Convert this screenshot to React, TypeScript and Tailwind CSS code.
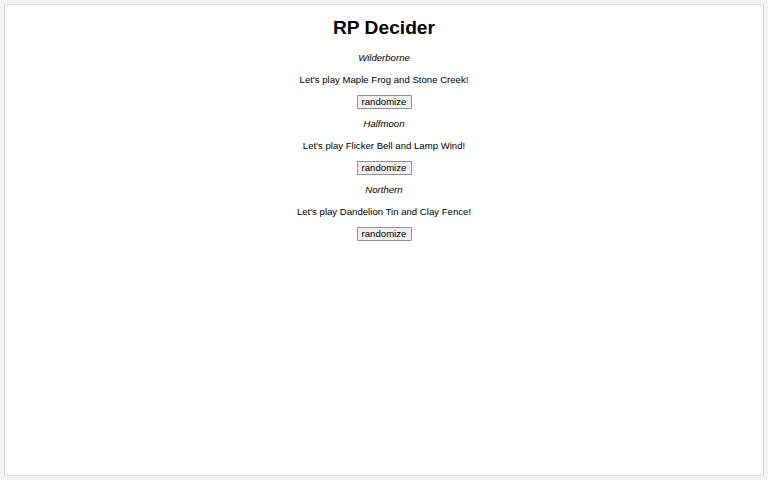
import React from "react";

const groups = [
  { name: "Wilderborne", a: "Maple Frog", b: "Stone Creek" },
  { name: "Halfmoon", a: "Flicker Bell", b: "Lamp Wind" },
  { name: "Northern", a: "Dandelion Tin", b: "Clay Fence" },
];

export default function App() {
  return (
    <div className="h-[480px] w-[768px] bg-[#f3f3f3] p-[4px] font-['Liberation_Sans',Arial,sans-serif] text-black">
      <div className="h-[472px] border border-[#dcdcdc] bg-white flex flex-col items-center">
        <h1 className="mt-[11px] text-[19.2px] font-bold leading-[24px]">RP Decider</h1>
        <div className="mt-[7px] flex flex-col items-center">
          {groups.map((g) => (
            <div key={g.name} className="flex flex-col items-center text-[9.6px] leading-[12px]">
              <div className="italic h-[22px] flex items-center">{g.name}</div>
              <div className="h-[22px] flex items-center">
                Let's play {g.a} and {g.b}!
              </div>
              <div className="h-[22px] flex items-center">
                <button className="border border-[#8f8f8f] bg-[#efefef] px-[4px] h-[14px] w-[55px] text-[9.6px] leading-[12px] rounded-[1px]">
                  randomize
                </button>
              </div>
            </div>
          ))}
        </div>
      </div>
    </div>
  );
}
